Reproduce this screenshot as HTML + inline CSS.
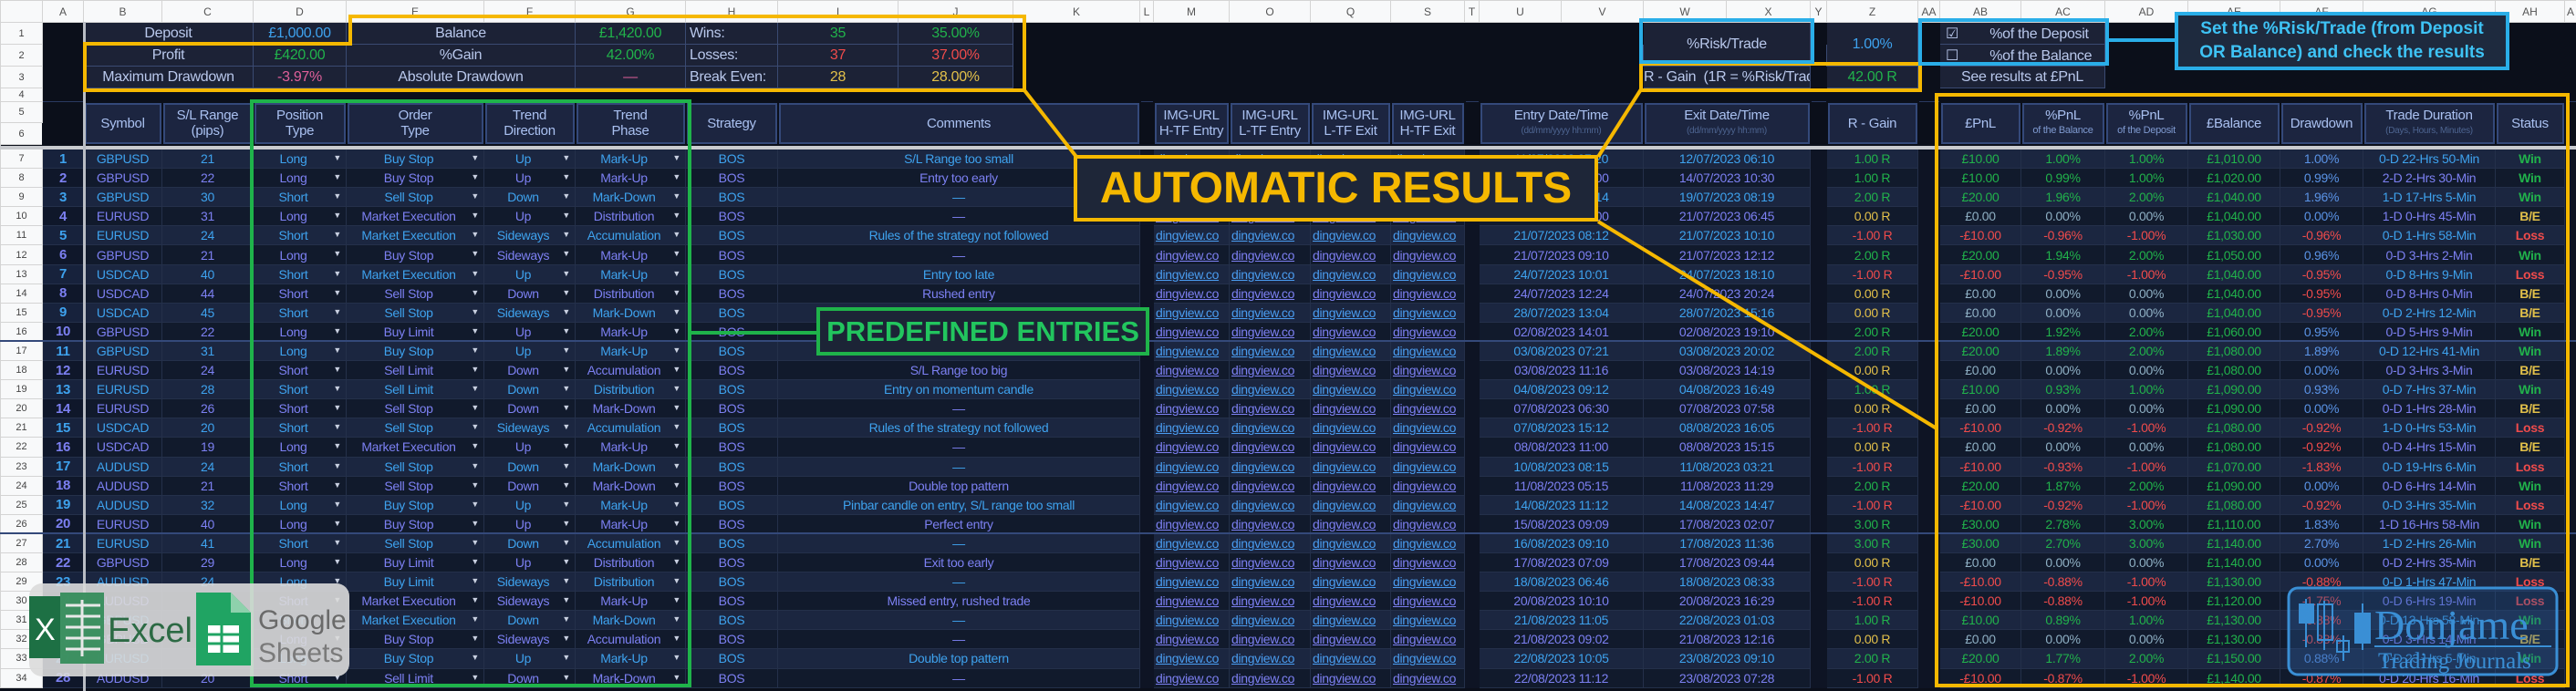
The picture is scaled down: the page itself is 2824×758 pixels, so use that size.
<!DOCTYPE html>
<html><head><meta charset="utf-8">
<style>
*{box-sizing:border-box;margin:0;padding:0}
body{width:2824px;height:758px;overflow:hidden;background:#0b0f1a;font-family:"Liberation Sans Narrow","Liberation Sans",sans-serif;position:relative}
table{border-collapse:collapse;table-layout:fixed;position:absolute;left:0;top:0;width:2824px}
td{border:1px solid #24304a;white-space:nowrap;overflow:hidden;text-align:center;font-size:14px;letter-spacing:-0.3px;padding:0;position:relative}
tr.hd td{background:#f8f9fa;color:#555;border:1px solid #d4d4d4;font-size:12px;letter-spacing:0;font-family:"Liberation Sans",sans-serif}
td.g{background:#f8f9fa!important;color:#444!important;border:1px solid #d4d4d4!important;font-size:11px;letter-spacing:0;font-family:"Liberation Sans",sans-serif;font-weight:normal!important}
td.k{background:#0b0f1a;border-color:#0b0f1a}
td.s{background:#1c2236;border:1px solid #3a4a72;color:#b9c8ec;font-size:16px}
td.sl{text-align:left;padding-left:4px}
td.h{background:#1c2540;border:2px solid #0b0f1a;box-shadow:inset 0 0 0 2px #34497a;color:#a9c0f0;font-size:15px;line-height:17px;white-space:normal}
td.h small{display:block;font-size:10px;color:#4d6490}
tr.sep td{background:#c9cbcf;border-color:#c9cbcf}
tr.o td{background:#1b2640;color:#3ea2ee}
tr.e td{background:#111a2c;color:#7c80f2}
tr.o td.ix{background:#17223c}tr.e td.ix{background:#0f172a}
td.ix{font-weight:bold;font-size:15px}
tr.o td.gp,tr.e td.gp{background:#0e1424;border-color:#0e1424}
td.dd{padding-right:14px}
td.dd i{position:absolute;right:5px;top:4px;font-style:normal;font-size:9px;color:#c8cfe0}
td.u{text-align:left;padding-left:2px;text-decoration:underline;color:#4a9cf0!important}
tr.e td.u{color:#7c80f2!important}
td.G{color:#21b24b!important}td.R{color:#ef4b4b!important}td.Y{color:#e2c04a!important}td.Z{color:#8fb0c4!important}td.B{color:#5a93e6!important}
td.st{font-weight:bold}
.ov{position:absolute}
</style></head><body>
<table>
<colgroup>
<col style="width:46px"><col style="width:45px"><col style="width:86px"><col style="width:100px"><col style="width:102px"><col style="width:151px"><col style="width:100px"><col style="width:121px"><col style="width:101px"><col style="width:132px"><col style="width:126px"><col style="width:139px"><col style="width:15px"><col style="width:83px"><col style="width:89px"><col style="width:88px"><col style="width:81px"><col style="width:16px"><col style="width:90px"><col style="width:90px"><col style="width:91px"><col style="width:92px"><col style="width:18px"><col style="width:100px"><col style="width:24px"><col style="width:89px"><col style="width:92px"><col style="width:91px"><col style="width:101px"><col style="width:91px"><col style="width:145px"><col style="width:76px"><col style="width:13px">
</colgroup>
<tr class="hd" style="height:24px"><td></td><td>A</td><td>B</td><td>C</td><td>D</td><td>E</td><td>F</td><td>G</td><td>H</td><td>I</td><td>J</td><td>K</td><td>L</td><td>M</td><td>O</td><td>Q</td><td>S</td><td>T</td><td>U</td><td>V</td><td>W</td><td>X</td><td>Y</td><td>Z</td><td>AA</td><td>AB</td><td>AC</td><td>AD</td><td>AE</td><td>AF</td><td>AG</td><td>AH</td><td>A</td></tr>
<tr style="height:24px"><td class="g">1</td><td class="k"></td><td class="s" colspan="2">Deposit</td><td class="s" style="color:#3ea2ee">£1,000.00</td><td class="s" colspan="2">Balance</td><td class="s" style="color:#21b24b">£1,420.00</td><td class="s sl">Wins:</td><td class="s" style="color:#21b24b">35</td><td class="s" style="color:#21b24b">35.00%</td><td class="k" colspan="9"></td><td class="s" colspan="2" rowspan="2">%Risk/Trade</td><td class="k"></td><td class="s" rowspan="2" style="color:#3ea2ee">1.00%</td><td class="k"></td><td class="s" colspan="2" style="text-align:left;padding-left:6px">☑ <span style="padding-left:30px">%of the Deposit</span></td><td class="k" colspan="6"></td></tr>
<tr style="height:24px"><td class="g">2</td><td class="k"></td><td class="s" colspan="2">Profit</td><td class="s" style="color:#21b24b">£420.00</td><td class="s" colspan="2">%Gain</td><td class="s" style="color:#21b24b">42.00%</td><td class="s sl">Losses:</td><td class="s" style="color:#ef4b4b">37</td><td class="s" style="color:#ef4b4b">37.00%</td><td class="k" colspan="9"></td><td class="k"></td><td class="k"></td><td class="s" colspan="2" style="text-align:left;padding-left:6px">☐ <span style="padding-left:30px">%of the Balance</span></td><td class="k" colspan="6"></td></tr>
<tr style="height:24px"><td class="g">3</td><td class="k"></td><td class="s" colspan="2">Maximum Drawdown</td><td class="s" style="color:#e0609a">-3.97%</td><td class="s" colspan="2">Absolute Drawdown</td><td class="s" style="color:#e0609a">—</td><td class="s sl">Break Even:</td><td class="s" style="color:#e2c04a">28</td><td class="s" style="color:#e2c04a">28.00%</td><td class="k" colspan="9"></td><td class="s" colspan="2">R - Gain&nbsp; (1R = %Risk/Trade)</td><td class="k"></td><td class="s" style="color:#21b24b">42.00 R</td><td class="k"></td><td class="s" colspan="2">See results at £PnL</td><td class="k" colspan="6"></td></tr>
<tr style="height:15px"><td class="g">4</td><td class="k" colspan="32" style="border-bottom:1px solid #2a3a60"></td></tr>
<tr style="height:23px"><td class="g">5</td><td class="k" rowspan="2"></td><td class="h" rowspan="2">Symbol</td><td class="h" rowspan="2">S/L Range<br>(pips)</td><td class="h" rowspan="2">Position<br>Type</td><td class="h" rowspan="2">Order<br>Type</td><td class="h" rowspan="2">Trend<br>Direction</td><td class="h" rowspan="2">Trend<br>Phase</td><td class="h" rowspan="2">Strategy</td><td class="h" rowspan="2" colspan="3">Comments</td><td class="k" rowspan="2"></td><td class="h" rowspan="2">IMG-URL<br>H-TF Entry</td><td class="h" rowspan="2">IMG-URL<br>L-TF Entry</td><td class="h" rowspan="2">IMG-URL<br>L-TF Exit</td><td class="h" rowspan="2">IMG-URL<br>H-TF Exit</td><td class="k" rowspan="2"></td><td class="h" rowspan="2" colspan="2">Entry Date/Time<small>(dd/mm/yyyy hh:mm)</small></td><td class="h" rowspan="2" colspan="2">Exit Date/Time<small>(dd/mm/yyyy hh:mm)</small></td><td class="k" rowspan="2"></td><td class="h" rowspan="2">R - Gain</td><td class="k" rowspan="2"></td><td class="h" rowspan="2">£PnL</td><td class="h" rowspan="2">%PnL<small style="font-size:11px;color:#7f9ad0">of the Balance</small></td><td class="h" rowspan="2">%PnL<small style="font-size:11px;color:#7f9ad0">of the Deposit</small></td><td class="h" rowspan="2">£Balance</td><td class="h" rowspan="2">Drawdown</td><td class="h" rowspan="2">Trade Duration<small>(Days, Hours, Minutes)</small></td><td class="h" rowspan="2">Status</td><td class="k" rowspan="2"></td></tr>
<tr style="height:24px"><td class="g">6</td></tr>
<tr class="sep" style="height:5px"><td colspan="33"></td></tr>

<tr class="o" style="height:21.1px"><td class="g">7</td><td class="ix">1</td><td>GBPUSD</td><td>21</td><td class="dd">Long<i>▼</i></td><td class="dd">Buy Stop<i>▼</i></td><td class="dd">Up<i>▼</i></td><td class="dd">Mark-Up<i>▼</i></td><td>BOS</td><td colspan="3">S/L Range too small</td><td class="gp"></td><td class="u">dingview.co</td><td class="u">dingview.co</td><td class="u">dingview.co</td><td class="u">dingview.co</td><td class="gp"></td><td colspan="2">11/07/2023 07:20</td><td colspan="2">12/07/2023 06:10</td><td class="gp"></td><td class="G">1.00 R</td><td class="gp"></td><td class="G">£10.00</td><td class="G">1.00%</td><td class="G">1.00%</td><td class="G">£1,010.00</td><td class="B">1.00%</td><td>0-D 22-Hrs 50-Min</td><td class="G st">Win</td><td class="gp"></td></tr>
<tr class="e" style="height:21.1px"><td class="g">8</td><td class="ix">2</td><td>GBPUSD</td><td>22</td><td class="dd">Long<i>▼</i></td><td class="dd">Buy Stop<i>▼</i></td><td class="dd">Up<i>▼</i></td><td class="dd">Mark-Up<i>▼</i></td><td>BOS</td><td colspan="3">Entry too early</td><td class="gp"></td><td class="u">dingview.co</td><td class="u">dingview.co</td><td class="u">dingview.co</td><td class="u">dingview.co</td><td class="gp"></td><td colspan="2">12/07/2023 08:00</td><td colspan="2">14/07/2023 10:30</td><td class="gp"></td><td class="G">1.00 R</td><td class="gp"></td><td class="G">£10.00</td><td class="G">0.99%</td><td class="G">1.00%</td><td class="G">£1,020.00</td><td class="B">0.99%</td><td>2-D 2-Hrs 30-Min</td><td class="G st">Win</td><td class="gp"></td></tr>
<tr class="o" style="height:21.1px"><td class="g">9</td><td class="ix">3</td><td>GBPUSD</td><td>30</td><td class="dd">Short<i>▼</i></td><td class="dd">Sell Stop<i>▼</i></td><td class="dd">Down<i>▼</i></td><td class="dd">Mark-Down<i>▼</i></td><td>BOS</td><td colspan="3">—</td><td class="gp"></td><td class="u">dingview.co</td><td class="u">dingview.co</td><td class="u">dingview.co</td><td class="u">dingview.co</td><td class="gp"></td><td colspan="2">18/07/2023 15:14</td><td colspan="2">19/07/2023 08:19</td><td class="gp"></td><td class="G">2.00 R</td><td class="gp"></td><td class="G">£20.00</td><td class="G">1.96%</td><td class="G">2.00%</td><td class="G">£1,040.00</td><td class="B">1.96%</td><td>1-D 17-Hrs 5-Min</td><td class="G st">Win</td><td class="gp"></td></tr>
<tr class="e" style="height:21.1px"><td class="g">10</td><td class="ix">4</td><td>EURUSD</td><td>31</td><td class="dd">Long<i>▼</i></td><td class="dd">Market Execution<i>▼</i></td><td class="dd">Up<i>▼</i></td><td class="dd">Distribution<i>▼</i></td><td>BOS</td><td colspan="3">—</td><td class="gp"></td><td class="u">dingview.co</td><td class="u">dingview.co</td><td class="u">dingview.co</td><td class="u">dingview.co</td><td class="gp"></td><td colspan="2">20/07/2023 06:00</td><td colspan="2">21/07/2023 06:45</td><td class="gp"></td><td class="Y">0.00 R</td><td class="gp"></td><td class="Z">£0.00</td><td class="Z">0.00%</td><td class="Z">0.00%</td><td class="G">£1,040.00</td><td class="B">0.00%</td><td>1-D 0-Hrs 45-Min</td><td class="Y st">B/E</td><td class="gp"></td></tr>
<tr class="o" style="height:21.1px"><td class="g">11</td><td class="ix">5</td><td>EURUSD</td><td>24</td><td class="dd">Short<i>▼</i></td><td class="dd">Market Execution<i>▼</i></td><td class="dd">Sideways<i>▼</i></td><td class="dd">Accumulation<i>▼</i></td><td>BOS</td><td colspan="3">Rules of the strategy not followed</td><td class="gp"></td><td class="u">dingview.co</td><td class="u">dingview.co</td><td class="u">dingview.co</td><td class="u">dingview.co</td><td class="gp"></td><td colspan="2">21/07/2023 08:12</td><td colspan="2">21/07/2023 10:10</td><td class="gp"></td><td class="R">-1.00 R</td><td class="gp"></td><td class="R">-£10.00</td><td class="R">-0.96%</td><td class="R">-1.00%</td><td class="G">£1,030.00</td><td class="R">-0.96%</td><td>0-D 1-Hrs 58-Min</td><td class="R st">Loss</td><td class="gp"></td></tr>
<tr class="e" style="height:21.1px"><td class="g">12</td><td class="ix">6</td><td>GBPUSD</td><td>21</td><td class="dd">Long<i>▼</i></td><td class="dd">Buy Stop<i>▼</i></td><td class="dd">Sideways<i>▼</i></td><td class="dd">Mark-Up<i>▼</i></td><td>BOS</td><td colspan="3">—</td><td class="gp"></td><td class="u">dingview.co</td><td class="u">dingview.co</td><td class="u">dingview.co</td><td class="u">dingview.co</td><td class="gp"></td><td colspan="2">21/07/2023 09:10</td><td colspan="2">21/07/2023 12:12</td><td class="gp"></td><td class="G">2.00 R</td><td class="gp"></td><td class="G">£20.00</td><td class="G">1.94%</td><td class="G">2.00%</td><td class="G">£1,050.00</td><td class="B">0.96%</td><td>0-D 3-Hrs 2-Min</td><td class="G st">Win</td><td class="gp"></td></tr>
<tr class="o" style="height:21.1px"><td class="g">13</td><td class="ix">7</td><td>USDCAD</td><td>40</td><td class="dd">Short<i>▼</i></td><td class="dd">Market Execution<i>▼</i></td><td class="dd">Up<i>▼</i></td><td class="dd">Mark-Up<i>▼</i></td><td>BOS</td><td colspan="3">Entry too late</td><td class="gp"></td><td class="u">dingview.co</td><td class="u">dingview.co</td><td class="u">dingview.co</td><td class="u">dingview.co</td><td class="gp"></td><td colspan="2">24/07/2023 10:01</td><td colspan="2">24/07/2023 18:10</td><td class="gp"></td><td class="R">-1.00 R</td><td class="gp"></td><td class="R">-£10.00</td><td class="R">-0.95%</td><td class="R">-1.00%</td><td class="G">£1,040.00</td><td class="R">-0.95%</td><td>0-D 8-Hrs 9-Min</td><td class="R st">Loss</td><td class="gp"></td></tr>
<tr class="e" style="height:21.1px"><td class="g">14</td><td class="ix">8</td><td>USDCAD</td><td>44</td><td class="dd">Short<i>▼</i></td><td class="dd">Sell Stop<i>▼</i></td><td class="dd">Down<i>▼</i></td><td class="dd">Distribution<i>▼</i></td><td>BOS</td><td colspan="3">Rushed entry</td><td class="gp"></td><td class="u">dingview.co</td><td class="u">dingview.co</td><td class="u">dingview.co</td><td class="u">dingview.co</td><td class="gp"></td><td colspan="2">24/07/2023 12:24</td><td colspan="2">24/07/2023 20:24</td><td class="gp"></td><td class="Y">0.00 R</td><td class="gp"></td><td class="Z">£0.00</td><td class="Z">0.00%</td><td class="Z">0.00%</td><td class="G">£1,040.00</td><td class="R">-0.95%</td><td>0-D 8-Hrs 0-Min</td><td class="Y st">B/E</td><td class="gp"></td></tr>
<tr class="o" style="height:21.1px"><td class="g">15</td><td class="ix">9</td><td>USDCAD</td><td>45</td><td class="dd">Short<i>▼</i></td><td class="dd">Sell Stop<i>▼</i></td><td class="dd">Sideways<i>▼</i></td><td class="dd">Mark-Down<i>▼</i></td><td>BOS</td><td colspan="3">—</td><td class="gp"></td><td class="u">dingview.co</td><td class="u">dingview.co</td><td class="u">dingview.co</td><td class="u">dingview.co</td><td class="gp"></td><td colspan="2">28/07/2023 13:04</td><td colspan="2">28/07/2023 15:16</td><td class="gp"></td><td class="Y">0.00 R</td><td class="gp"></td><td class="Z">£0.00</td><td class="Z">0.00%</td><td class="Z">0.00%</td><td class="G">£1,040.00</td><td class="R">-0.95%</td><td>0-D 2-Hrs 12-Min</td><td class="Y st">B/E</td><td class="gp"></td></tr>
<tr class="e" style="height:21.1px"><td class="g">16</td><td class="ix">10</td><td>GBPUSD</td><td>22</td><td class="dd">Long<i>▼</i></td><td class="dd">Buy Limit<i>▼</i></td><td class="dd">Up<i>▼</i></td><td class="dd">Mark-Up<i>▼</i></td><td>BOS</td><td colspan="3">—</td><td class="gp"></td><td class="u">dingview.co</td><td class="u">dingview.co</td><td class="u">dingview.co</td><td class="u">dingview.co</td><td class="gp"></td><td colspan="2">02/08/2023 14:01</td><td colspan="2">02/08/2023 19:10</td><td class="gp"></td><td class="G">2.00 R</td><td class="gp"></td><td class="G">£20.00</td><td class="G">1.92%</td><td class="G">2.00%</td><td class="G">£1,060.00</td><td class="B">0.95%</td><td>0-D 5-Hrs 9-Min</td><td class="G st">Win</td><td class="gp"></td></tr>
<tr class="o" style="height:21.1px;border-top:2px solid #34497a"><td class="g">17</td><td class="ix">11</td><td>GBPUSD</td><td>31</td><td class="dd">Long<i>▼</i></td><td class="dd">Buy Stop<i>▼</i></td><td class="dd">Up<i>▼</i></td><td class="dd">Mark-Up<i>▼</i></td><td>BOS</td><td colspan="3">—</td><td class="gp"></td><td class="u">dingview.co</td><td class="u">dingview.co</td><td class="u">dingview.co</td><td class="u">dingview.co</td><td class="gp"></td><td colspan="2">03/08/2023 07:21</td><td colspan="2">03/08/2023 20:02</td><td class="gp"></td><td class="G">2.00 R</td><td class="gp"></td><td class="G">£20.00</td><td class="G">1.89%</td><td class="G">2.00%</td><td class="G">£1,080.00</td><td class="B">1.89%</td><td>0-D 12-Hrs 41-Min</td><td class="G st">Win</td><td class="gp"></td></tr>
<tr class="e" style="height:21.1px"><td class="g">18</td><td class="ix">12</td><td>EURUSD</td><td>24</td><td class="dd">Short<i>▼</i></td><td class="dd">Sell Limit<i>▼</i></td><td class="dd">Down<i>▼</i></td><td class="dd">Accumulation<i>▼</i></td><td>BOS</td><td colspan="3">S/L Range too big</td><td class="gp"></td><td class="u">dingview.co</td><td class="u">dingview.co</td><td class="u">dingview.co</td><td class="u">dingview.co</td><td class="gp"></td><td colspan="2">03/08/2023 11:16</td><td colspan="2">03/08/2023 14:19</td><td class="gp"></td><td class="Y">0.00 R</td><td class="gp"></td><td class="Z">£0.00</td><td class="Z">0.00%</td><td class="Z">0.00%</td><td class="G">£1,080.00</td><td class="B">0.00%</td><td>0-D 3-Hrs 3-Min</td><td class="Y st">B/E</td><td class="gp"></td></tr>
<tr class="o" style="height:21.1px"><td class="g">19</td><td class="ix">13</td><td>EURUSD</td><td>28</td><td class="dd">Short<i>▼</i></td><td class="dd">Sell Limit<i>▼</i></td><td class="dd">Down<i>▼</i></td><td class="dd">Distribution<i>▼</i></td><td>BOS</td><td colspan="3">Entry on momentum candle</td><td class="gp"></td><td class="u">dingview.co</td><td class="u">dingview.co</td><td class="u">dingview.co</td><td class="u">dingview.co</td><td class="gp"></td><td colspan="2">04/08/2023 09:12</td><td colspan="2">04/08/2023 16:49</td><td class="gp"></td><td class="G">1.00 R</td><td class="gp"></td><td class="G">£10.00</td><td class="G">0.93%</td><td class="G">1.00%</td><td class="G">£1,090.00</td><td class="B">0.93%</td><td>0-D 7-Hrs 37-Min</td><td class="G st">Win</td><td class="gp"></td></tr>
<tr class="e" style="height:21.1px"><td class="g">20</td><td class="ix">14</td><td>EURUSD</td><td>26</td><td class="dd">Short<i>▼</i></td><td class="dd">Sell Stop<i>▼</i></td><td class="dd">Down<i>▼</i></td><td class="dd">Mark-Down<i>▼</i></td><td>BOS</td><td colspan="3">—</td><td class="gp"></td><td class="u">dingview.co</td><td class="u">dingview.co</td><td class="u">dingview.co</td><td class="u">dingview.co</td><td class="gp"></td><td colspan="2">07/08/2023 06:30</td><td colspan="2">07/08/2023 07:58</td><td class="gp"></td><td class="Y">0.00 R</td><td class="gp"></td><td class="Z">£0.00</td><td class="Z">0.00%</td><td class="Z">0.00%</td><td class="G">£1,090.00</td><td class="B">0.00%</td><td>0-D 1-Hrs 28-Min</td><td class="Y st">B/E</td><td class="gp"></td></tr>
<tr class="o" style="height:21.1px"><td class="g">21</td><td class="ix">15</td><td>USDCAD</td><td>20</td><td class="dd">Short<i>▼</i></td><td class="dd">Sell Stop<i>▼</i></td><td class="dd">Sideways<i>▼</i></td><td class="dd">Accumulation<i>▼</i></td><td>BOS</td><td colspan="3">Rules of the strategy not followed</td><td class="gp"></td><td class="u">dingview.co</td><td class="u">dingview.co</td><td class="u">dingview.co</td><td class="u">dingview.co</td><td class="gp"></td><td colspan="2">07/08/2023 15:12</td><td colspan="2">08/08/2023 16:05</td><td class="gp"></td><td class="R">-1.00 R</td><td class="gp"></td><td class="R">-£10.00</td><td class="R">-0.92%</td><td class="R">-1.00%</td><td class="G">£1,080.00</td><td class="R">-0.92%</td><td>1-D 0-Hrs 53-Min</td><td class="R st">Loss</td><td class="gp"></td></tr>
<tr class="e" style="height:21.1px"><td class="g">22</td><td class="ix">16</td><td>USDCAD</td><td>19</td><td class="dd">Long<i>▼</i></td><td class="dd">Market Execution<i>▼</i></td><td class="dd">Up<i>▼</i></td><td class="dd">Mark-Up<i>▼</i></td><td>BOS</td><td colspan="3">—</td><td class="gp"></td><td class="u">dingview.co</td><td class="u">dingview.co</td><td class="u">dingview.co</td><td class="u">dingview.co</td><td class="gp"></td><td colspan="2">08/08/2023 11:00</td><td colspan="2">08/08/2023 15:15</td><td class="gp"></td><td class="Y">0.00 R</td><td class="gp"></td><td class="Z">£0.00</td><td class="Z">0.00%</td><td class="Z">0.00%</td><td class="G">£1,080.00</td><td class="R">-0.92%</td><td>0-D 4-Hrs 15-Min</td><td class="Y st">B/E</td><td class="gp"></td></tr>
<tr class="o" style="height:21.1px"><td class="g">23</td><td class="ix">17</td><td>AUDUSD</td><td>24</td><td class="dd">Short<i>▼</i></td><td class="dd">Sell Stop<i>▼</i></td><td class="dd">Down<i>▼</i></td><td class="dd">Mark-Down<i>▼</i></td><td>BOS</td><td colspan="3">—</td><td class="gp"></td><td class="u">dingview.co</td><td class="u">dingview.co</td><td class="u">dingview.co</td><td class="u">dingview.co</td><td class="gp"></td><td colspan="2">10/08/2023 08:15</td><td colspan="2">11/08/2023 03:21</td><td class="gp"></td><td class="R">-1.00 R</td><td class="gp"></td><td class="R">-£10.00</td><td class="R">-0.93%</td><td class="R">-1.00%</td><td class="G">£1,070.00</td><td class="R">-1.83%</td><td>0-D 19-Hrs 6-Min</td><td class="R st">Loss</td><td class="gp"></td></tr>
<tr class="e" style="height:21.1px"><td class="g">24</td><td class="ix">18</td><td>AUDUSD</td><td>21</td><td class="dd">Short<i>▼</i></td><td class="dd">Sell Stop<i>▼</i></td><td class="dd">Down<i>▼</i></td><td class="dd">Mark-Down<i>▼</i></td><td>BOS</td><td colspan="3">Double top pattern</td><td class="gp"></td><td class="u">dingview.co</td><td class="u">dingview.co</td><td class="u">dingview.co</td><td class="u">dingview.co</td><td class="gp"></td><td colspan="2">11/08/2023 05:15</td><td colspan="2">11/08/2023 11:29</td><td class="gp"></td><td class="G">2.00 R</td><td class="gp"></td><td class="G">£20.00</td><td class="G">1.87%</td><td class="G">2.00%</td><td class="G">£1,090.00</td><td class="B">0.00%</td><td>0-D 6-Hrs 14-Min</td><td class="G st">Win</td><td class="gp"></td></tr>
<tr class="o" style="height:21.1px"><td class="g">25</td><td class="ix">19</td><td>AUDUSD</td><td>32</td><td class="dd">Long<i>▼</i></td><td class="dd">Buy Stop<i>▼</i></td><td class="dd">Up<i>▼</i></td><td class="dd">Mark-Up<i>▼</i></td><td>BOS</td><td colspan="3">Pinbar candle on entry, S/L range too small</td><td class="gp"></td><td class="u">dingview.co</td><td class="u">dingview.co</td><td class="u">dingview.co</td><td class="u">dingview.co</td><td class="gp"></td><td colspan="2">14/08/2023 11:12</td><td colspan="2">14/08/2023 14:47</td><td class="gp"></td><td class="R">-1.00 R</td><td class="gp"></td><td class="R">-£10.00</td><td class="R">-0.92%</td><td class="R">-1.00%</td><td class="G">£1,080.00</td><td class="R">-0.92%</td><td>0-D 3-Hrs 35-Min</td><td class="R st">Loss</td><td class="gp"></td></tr>
<tr class="e" style="height:21.1px"><td class="g">26</td><td class="ix">20</td><td>EURUSD</td><td>40</td><td class="dd">Long<i>▼</i></td><td class="dd">Buy Stop<i>▼</i></td><td class="dd">Up<i>▼</i></td><td class="dd">Mark-Up<i>▼</i></td><td>BOS</td><td colspan="3">Perfect entry</td><td class="gp"></td><td class="u">dingview.co</td><td class="u">dingview.co</td><td class="u">dingview.co</td><td class="u">dingview.co</td><td class="gp"></td><td colspan="2">15/08/2023 09:09</td><td colspan="2">17/08/2023 02:07</td><td class="gp"></td><td class="G">3.00 R</td><td class="gp"></td><td class="G">£30.00</td><td class="G">2.78%</td><td class="G">3.00%</td><td class="G">£1,110.00</td><td class="B">1.83%</td><td>1-D 16-Hrs 58-Min</td><td class="G st">Win</td><td class="gp"></td></tr>
<tr class="o" style="height:21.1px;border-top:2px solid #34497a"><td class="g">27</td><td class="ix">21</td><td>EURUSD</td><td>41</td><td class="dd">Short<i>▼</i></td><td class="dd">Sell Stop<i>▼</i></td><td class="dd">Down<i>▼</i></td><td class="dd">Accumulation<i>▼</i></td><td>BOS</td><td colspan="3">—</td><td class="gp"></td><td class="u">dingview.co</td><td class="u">dingview.co</td><td class="u">dingview.co</td><td class="u">dingview.co</td><td class="gp"></td><td colspan="2">16/08/2023 09:10</td><td colspan="2">17/08/2023 11:36</td><td class="gp"></td><td class="G">3.00 R</td><td class="gp"></td><td class="G">£30.00</td><td class="G">2.70%</td><td class="G">3.00%</td><td class="G">£1,140.00</td><td class="B">2.70%</td><td>1-D 2-Hrs 26-Min</td><td class="G st">Win</td><td class="gp"></td></tr>
<tr class="e" style="height:21.1px"><td class="g">28</td><td class="ix">22</td><td>GBPUSD</td><td>29</td><td class="dd">Long<i>▼</i></td><td class="dd">Buy Limit<i>▼</i></td><td class="dd">Up<i>▼</i></td><td class="dd">Distribution<i>▼</i></td><td>BOS</td><td colspan="3">Exit too early</td><td class="gp"></td><td class="u">dingview.co</td><td class="u">dingview.co</td><td class="u">dingview.co</td><td class="u">dingview.co</td><td class="gp"></td><td colspan="2">17/08/2023 07:09</td><td colspan="2">17/08/2023 09:44</td><td class="gp"></td><td class="Y">0.00 R</td><td class="gp"></td><td class="Z">£0.00</td><td class="Z">0.00%</td><td class="Z">0.00%</td><td class="G">£1,140.00</td><td class="B">0.00%</td><td>0-D 2-Hrs 35-Min</td><td class="Y st">B/E</td><td class="gp"></td></tr>
<tr class="o" style="height:21.1px"><td class="g">29</td><td class="ix">23</td><td>AUDUSD</td><td>24</td><td class="dd">Long<i>▼</i></td><td class="dd">Buy Limit<i>▼</i></td><td class="dd">Sideways<i>▼</i></td><td class="dd">Distribution<i>▼</i></td><td>BOS</td><td colspan="3">—</td><td class="gp"></td><td class="u">dingview.co</td><td class="u">dingview.co</td><td class="u">dingview.co</td><td class="u">dingview.co</td><td class="gp"></td><td colspan="2">18/08/2023 06:46</td><td colspan="2">18/08/2023 08:33</td><td class="gp"></td><td class="R">-1.00 R</td><td class="gp"></td><td class="R">-£10.00</td><td class="R">-0.88%</td><td class="R">-1.00%</td><td class="G">£1,130.00</td><td class="R">-0.88%</td><td>0-D 1-Hrs 47-Min</td><td class="R st">Loss</td><td class="gp"></td></tr>
<tr class="e" style="height:21.1px"><td class="g">30</td><td class="ix">24</td><td>AUDUSD</td><td>20</td><td class="dd">Short<i>▼</i></td><td class="dd">Market Execution<i>▼</i></td><td class="dd">Sideways<i>▼</i></td><td class="dd">Mark-Up<i>▼</i></td><td>BOS</td><td colspan="3">Missed entry, rushed trade</td><td class="gp"></td><td class="u">dingview.co</td><td class="u">dingview.co</td><td class="u">dingview.co</td><td class="u">dingview.co</td><td class="gp"></td><td colspan="2">20/08/2023 10:10</td><td colspan="2">20/08/2023 16:29</td><td class="gp"></td><td class="R">-1.00 R</td><td class="gp"></td><td class="R">-£10.00</td><td class="R">-0.88%</td><td class="R">-1.00%</td><td class="G">£1,120.00</td><td class="R">-1.75%</td><td>0-D 6-Hrs 19-Min</td><td class="R st">Loss</td><td class="gp"></td></tr>
<tr class="o" style="height:21.1px"><td class="g">31</td><td class="ix">25</td><td>GBPUSD</td><td>18</td><td class="dd">Short<i>▼</i></td><td class="dd">Market Execution<i>▼</i></td><td class="dd">Down<i>▼</i></td><td class="dd">Mark-Down<i>▼</i></td><td>BOS</td><td colspan="3">—</td><td class="gp"></td><td class="u">dingview.co</td><td class="u">dingview.co</td><td class="u">dingview.co</td><td class="u">dingview.co</td><td class="gp"></td><td colspan="2">21/08/2023 11:05</td><td colspan="2">22/08/2023 01:03</td><td class="gp"></td><td class="G">1.00 R</td><td class="gp"></td><td class="G">£10.00</td><td class="G">0.89%</td><td class="G">1.00%</td><td class="G">£1,130.00</td><td class="R">-0.88%</td><td>0-D 13-Hrs 58-Min</td><td class="G st">Win</td><td class="gp"></td></tr>
<tr class="e" style="height:21.1px"><td class="g">32</td><td class="ix">26</td><td>GBPUSD</td><td>41</td><td class="dd">Long<i>▼</i></td><td class="dd">Buy Stop<i>▼</i></td><td class="dd">Sideways<i>▼</i></td><td class="dd">Accumulation<i>▼</i></td><td>BOS</td><td colspan="3">—</td><td class="gp"></td><td class="u">dingview.co</td><td class="u">dingview.co</td><td class="u">dingview.co</td><td class="u">dingview.co</td><td class="gp"></td><td colspan="2">21/08/2023 09:02</td><td colspan="2">21/08/2023 12:16</td><td class="gp"></td><td class="Y">0.00 R</td><td class="gp"></td><td class="Z">£0.00</td><td class="Z">0.00%</td><td class="Z">0.00%</td><td class="G">£1,130.00</td><td class="R">-0.88%</td><td>0-D 3-Hrs 14-Min</td><td class="Y st">B/E</td><td class="gp"></td></tr>
<tr class="o" style="height:21.1px"><td class="g">33</td><td class="ix">27</td><td>EURUSD</td><td>19</td><td class="dd">Long<i>▼</i></td><td class="dd">Buy Stop<i>▼</i></td><td class="dd">Up<i>▼</i></td><td class="dd">Mark-Up<i>▼</i></td><td>BOS</td><td colspan="3">Double top pattern</td><td class="gp"></td><td class="u">dingview.co</td><td class="u">dingview.co</td><td class="u">dingview.co</td><td class="u">dingview.co</td><td class="gp"></td><td colspan="2">22/08/2023 10:05</td><td colspan="2">23/08/2023 09:10</td><td class="gp"></td><td class="G">2.00 R</td><td class="gp"></td><td class="G">£20.00</td><td class="G">1.77%</td><td class="G">2.00%</td><td class="G">£1,150.00</td><td class="B">0.88%</td><td>0-D 23-Hrs 5-Min</td><td class="G st">Win</td><td class="gp"></td></tr>
<tr class="e" style="height:21.1px"><td class="g">34</td><td class="ix">28</td><td>AUDUSD</td><td>20</td><td class="dd">Short<i>▼</i></td><td class="dd">Sell Limit<i>▼</i></td><td class="dd">Down<i>▼</i></td><td class="dd">Mark-Down<i>▼</i></td><td>BOS</td><td colspan="3">—</td><td class="gp"></td><td class="u">dingview.co</td><td class="u">dingview.co</td><td class="u">dingview.co</td><td class="u">dingview.co</td><td class="gp"></td><td colspan="2">22/08/2023 11:12</td><td colspan="2">23/08/2023 07:28</td><td class="gp"></td><td class="R">-1.00 R</td><td class="gp"></td><td class="R">-£10.00</td><td class="R">-0.87%</td><td class="R">-1.00%</td><td class="G">£1,140.00</td><td class="R">-0.87%</td><td>0-D 20-Hrs 16-Min</td><td class="R st">Loss</td><td class="gp"></td></tr>
</table>

<div class="ov" style="left:91px;top:24px;width:3px;height:734px;background:#b9bdc4"></div>

<svg class="ov" style="left:0;top:0" width="2824" height="758">
<g fill="none" stroke="#f5b800" stroke-width="4">
<polygon points="384,18 1123,18 1123,99 93,99 93,48 384,48"/>
<line x1="1123" y1="99" x2="1180" y2="172"/>
<rect x="1799" y="70" width="306" height="29"/>
<line x1="1799" y1="98" x2="1752" y2="172"/>
<line x1="1752" y1="243" x2="2123" y2="470"/>
<rect x="2123" y="104" width="692" height="648"/>
</g>
<g fill="none" stroke="#1fb34a" stroke-width="4">
<rect x="276" y="111" width="480" height="641"/>
<line x1="756" y1="365" x2="895" y2="365"/>
</g>
<g fill="none" stroke="#2aaee8" stroke-width="4">
<rect x="1799" y="22" width="188" height="46"/>
<rect x="2105" y="22" width="205" height="48"/>
<line x1="2310" y1="44" x2="2384" y2="44"/>
</g>
</svg>

<div class="ov" style="left:1177px;top:170px;width:575px;height:73px;background:#1e2638;border:4px solid #f5b800;color:#f5b800;font:bold 48px 'Liberation Sans',sans-serif;text-align:center;line-height:65px">AUTOMATIC RESULTS</div>
<div class="ov" style="left:895px;top:337px;width:365px;height:53px;background:#1c2436;border:4px solid #1fb34a;color:#22c55e;font:bold 31px 'Liberation Sans',sans-serif;text-align:center;line-height:45px;white-space:nowrap">PREDEFINED ENTRIES</div>
<div class="ov" style="left:2384px;top:13px;width:367px;height:64px;background:#1e2a3e;border:4px solid #2aaee8;color:#3ec3f5;font:bold 19px 'Liberation Sans',sans-serif;text-align:center;line-height:26px;padding-top:2px">Set the %Risk/Trade (from Deposit<br>OR Balance) and check the results</div>

<div class="ov" style="left:32px;top:640px;width:351px;height:102px;background:rgba(218,218,218,0.9);border-radius:14px"></div>
<svg class="ov" style="left:32px;top:640px" width="351" height="102">
<rect x="0" y="14" width="34" height="68" fill="#1d7044"/>
<rect x="34" y="10" width="48" height="78" fill="#2e8a55" opacity="0.9"/>
<g stroke="#e8e8e8" stroke-width="3"><line x1="40" y1="24" x2="78" y2="24"/><line x1="40" y1="36" x2="78" y2="36"/><line x1="40" y1="48" x2="78" y2="48"/><line x1="40" y1="60" x2="78" y2="60"/><line x1="40" y1="72" x2="78" y2="72"/><line x1="58" y1="18" x2="58" y2="80"/></g>
<text x="6" y="62" fill="#fff" font-family="Liberation Sans" font-size="34">X</text>
<text x="86" y="64" fill="#2c6a44" font-family="Liberation Sans" font-size="38">Excel</text>
<path d="M183 10 H221 L243 32 V90 H183 Z" fill="#20a463"/>
<path d="M221 10 V32 H243 Z" fill="#8ed1ac"/>
<rect x="196" y="46" width="34" height="30" fill="#fff"/>
<g stroke="#20a463" stroke-width="3"><line x1="196" y1="56" x2="230" y2="56"/><line x1="196" y1="66" x2="230" y2="66"/><line x1="211" y1="46" x2="211" y2="76"/></g>
<text x="251" y="50" fill="#6a6a6a" font-family="Liberation Sans" font-size="30">Google</text>
<text x="251" y="86" fill="#7a7a7a" font-family="Liberation Sans" font-size="30">Sheets</text>
</svg>

<svg class="ov" style="left:2507px;top:643px" width="298" height="99">
<rect x="2" y="2" width="294" height="95" rx="10" fill="rgba(40,90,150,0.35)" stroke="#3a8fd5" stroke-width="3"/>
<g stroke="#3a8fd5" stroke-width="2" fill="none">
<line x1="21" y1="14" x2="21" y2="67"/><rect x="14" y="20" width="15" height="20" fill="#3a8fd5"/>
<line x1="41" y1="16" x2="41" y2="70"/><rect x="34" y="20" width="16" height="39"/>
<line x1="62" y1="54" x2="62" y2="82"/><rect x="55" y="60" width="13" height="12"/>
<line x1="83" y1="19" x2="83" y2="70"/><rect x="75" y="30" width="16" height="32" fill="#3a8fd5"/>
</g>
<text x="96" y="58" fill="#3a8fd5" font-family="Liberation Serif" font-size="46">Donjame</text>
<line x1="96" y1="66" x2="290" y2="66" stroke="#3a8fd5" stroke-width="2"/>
<text x="100" y="90" fill="#3a8fd5" font-family="Liberation Serif" font-size="25">Trading Journals</text>
</svg>
</body></html>
